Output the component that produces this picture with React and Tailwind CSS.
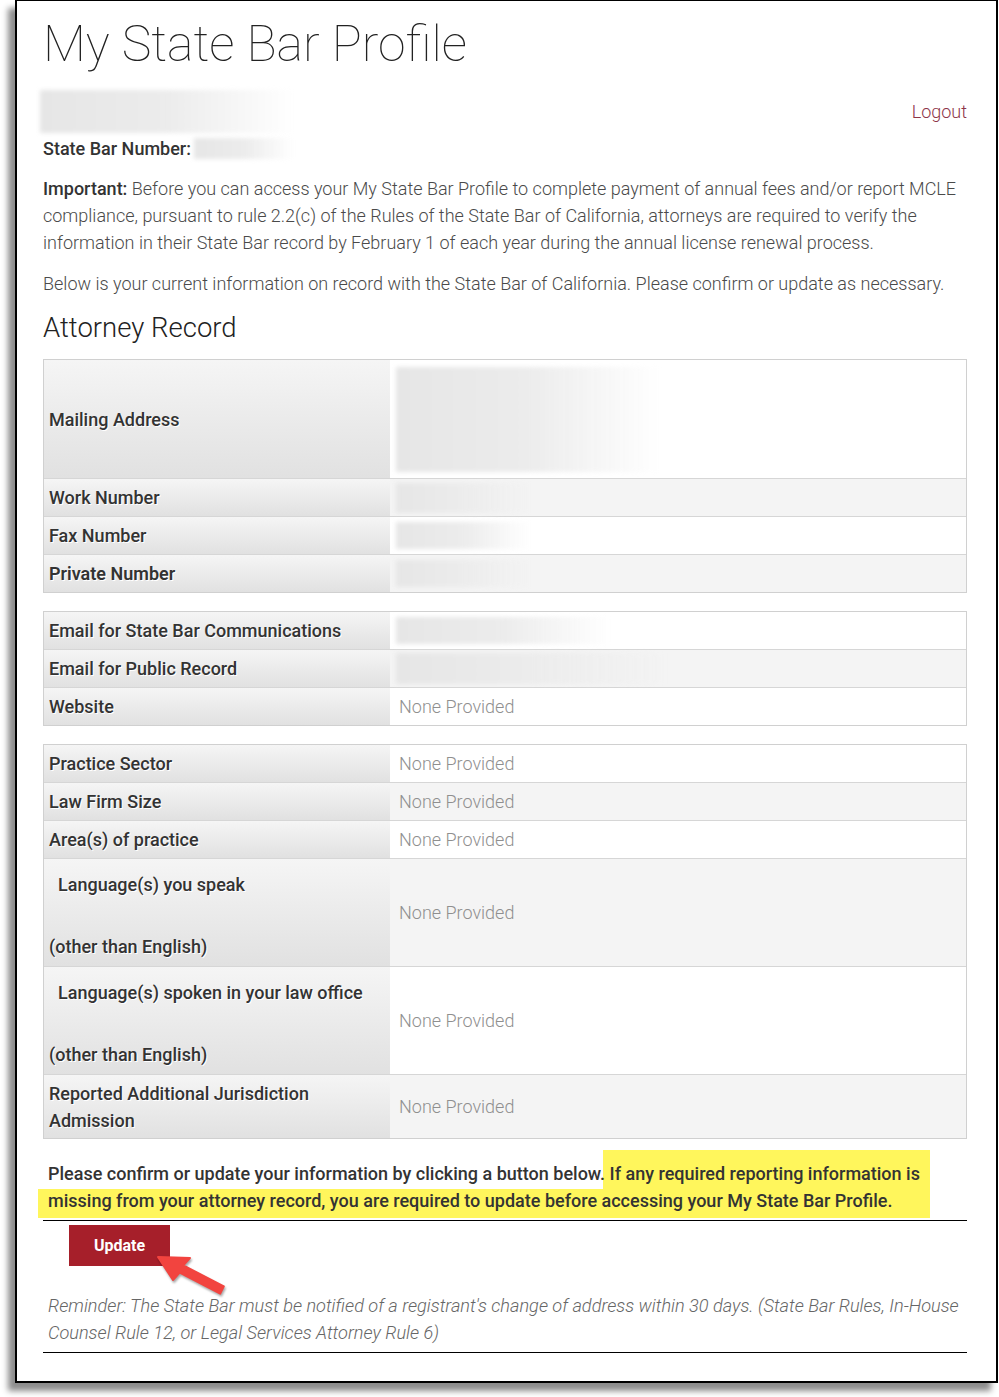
import React from 'react';

const font = "font-[Roboto,'Liberation_Sans',sans-serif]";

// blurred placeholder for redacted values
function Smudge({ className = '' }) {
  return (
    <div
      className={`bg-gradient-to-r from-[#e6e6e6] via-[#ececec] to-transparent blur-[2px] ${className}`}
    />
  );
}

function Label({ children }) {
  return (
    <div className="w-[346px] shrink-0 flex items-center pl-[5px] bg-gradient-to-b from-[#f5f5f5] to-[#e1e1e1] text-[18px] font-medium text-[#333] [text-shadow:1px_1px_0_#fff] leading-[27px]">
      {children}
    </div>
  );
}

function None() {
  return <span className="text-[18px] font-light text-[#8f8f8f]">None Provided</span>;
}

function Row({ label, value, h, gray, first }) {
  return (
    <div className={`flex ${h} ${first ? '' : 'border-t border-[#d6d6d6]'}`}>
      <Label>{label}</Label>
      <div className={`flex-1 flex items-center pl-[9px] ${gray ? 'bg-[#f4f4f4]' : 'bg-white'}`}>
        {value}
      </div>
    </div>
  );
}

function LangLabel({ text }) {
  return (
    <div className="w-[346px] shrink-0 flex flex-col pl-[5px] pt-[12px] bg-gradient-to-b from-[#f5f5f5] to-[#e1e1e1] text-[18px] font-medium text-[#333] [text-shadow:1px_1px_0_#fff] leading-[27px]">
      <span className="pl-[9px]">{text}</span>
      <span className="mt-[35px]">(other than English)</span>
    </div>
  );
}

export default function App() {
  return (
    <div className={`relative w-[999px] h-[1397px] bg-white ${font}`}>
      <div className="ml-[15px] w-[983px] h-[1383px] border-t border-l-2 border-r-2 border-b-2 border-black shadow-[-7px_8px_6px_rgba(0,0,0,0.45)] pl-[26px] pr-[29px] bg-white">
        <h1 className="pt-[13px] text-[50px] leading-[1.2] font-thin text-[#222]">My State Bar Profile</h1>

        <div className="flex justify-between items-start mt-[16px]">
          <Smudge className="-ml-[3px] w-[255px] h-[43px]" />
          <a className="mt-[8px] text-[18px] leading-[27px] font-light text-[#8e3447]">Logout</a>
        </div>

        <div className="mt-[2px] flex items-center text-[18px] leading-[27px] font-medium text-[#333]">
          State Bar Number:
          <Smudge className="ml-[3px] w-[100px] h-[21px]" />
        </div>

        <p className="mt-[13px] text-[18px] leading-[27px] font-light text-[#4a4a4a]">
          <span className="font-medium text-[#333]">Important:</span> Before you can access your My State Bar Profile to complete payment of annual fees and/or report MCLE compliance, pursuant to rule 2.2(c) of the Rules of the State Bar of California, attorneys are required to verify the information in their State Bar record by February 1 of each year during the annual license renewal process.
        </p>

        <p className="mt-[14px] text-[18px] leading-[27px] font-light text-[#4a4a4a]">
          Below is your current information on record with the State Bar of California. Please confirm or update as necessary.
        </p>

        <h2 className="mt-[14px] text-[27.5px] leading-[1.2] font-light text-[#222]">Attorney Record</h2>

        <div className="mt-[15px] border border-[#d0d0d0]">
          <Row first h="h-[118px]" label="Mailing Address" value={<Smudge className="-ml-[3px] w-[264px] h-[105px]" />} />
          <Row h="h-[38px]" gray label="Work Number" value={<Smudge className="-ml-[3px] w-[134px] h-[30px]" />} />
          <Row h="h-[38px]" label="Fax Number" value={<Smudge className="-ml-[3px] w-[134px] h-[27px]" />} />
          <Row h="h-[38px]" gray label={<span className="font-semibold">Private Number</span>} value={<Smudge className="-ml-[3px] w-[134px] h-[27px]" />} />
        </div>

        <div className="mt-[18px] border border-[#d0d0d0]">
          <Row first h="h-[37px]" label="Email for State Bar Communications" value={<Smudge className="-ml-[3px] w-[214px] h-[27px]" />} />
          <Row h="h-[38px]" gray label="Email for Public Record" value={<Smudge className="-ml-[3px] w-[270px] h-[31px]" />} />
          <Row h="h-[38px]" label="Website" value={<None />} />
        </div>

        <div className="mt-[18px] border border-[#d0d0d0]">
          <Row first h="h-[37px]" label="Practice Sector" value={<None />} />
          <Row h="h-[38px]" gray label="Law Firm Size" value={<None />} />
          <Row h="h-[38px]" label="Area(s) of practice" value={<None />} />
          <div className="flex h-[108px] border-t border-[#d6d6d6]">
            <LangLabel text="Language(s) you speak" />
            <div className="flex-1 flex items-center pl-[9px] bg-[#f4f4f4]"><None /></div>
          </div>
          <div className="flex h-[108px] border-t border-[#d6d6d6]">
            <LangLabel text="Language(s) spoken in your law office" />
            <div className="flex-1 flex items-center pl-[9px] bg-white"><None /></div>
          </div>
          <Row h="h-[64px]" gray label={<span>Reported Additional Jurisdiction<br />Admission</span>} value={<None />} />
        </div>

        <div className="relative mt-[21px] pl-[5px]">
          <div className="absolute left-[560px] top-[-10px] w-[327px] h-[41px] bg-[#fff65c]" />
          <div className="absolute left-[-5px] top-[29px] w-[892px] h-[29px] bg-[#fff65c]" />
          <p className="relative text-[18px] leading-[27px] font-medium text-[#333]">
            Please confirm or update your information by clicking a button below. If any required reporting information is missing from your attorney record, you are required to update before accessing your My State Bar Profile.
          </p>
        </div>

        <div className="mt-[6px] h-px bg-black" />

        <button className="mt-[4px] ml-[26px] w-[101px] h-[41px] bg-[#a61f2a] text-white text-[16px] font-bold">
          Update
        </button>

        <p className="mt-[26px] pl-[5px] text-[18.15px] leading-[27px] font-light italic text-[#666]">
          Reminder: The State Bar must be notified of a registrant's change of address within 30 days. (State Bar Rules, In-House Counsel Rule 12, or Legal Services Attorney Rule 6)
        </p>

        <div className="mt-[6px] h-px bg-black" />
      </div>

      {/* annotation arrow */}
      <svg
        className="absolute left-[150px] top-[1248px] drop-shadow-[1px_2px_1px_rgba(0,0,0,0.35)]"
        width="84"
        height="54"
        viewBox="0 0 84 54"
      >
        <polygon
          points="8,9 40,10 33.3,17.4 73.8,38.4 70.2,45.6 29.7,24.6 23,32"
          fill="#f2443f"
          stroke="#f2443f"
          strokeWidth="2"
          strokeLinejoin="round"
        />
      </svg>
    </div>
  );
}
